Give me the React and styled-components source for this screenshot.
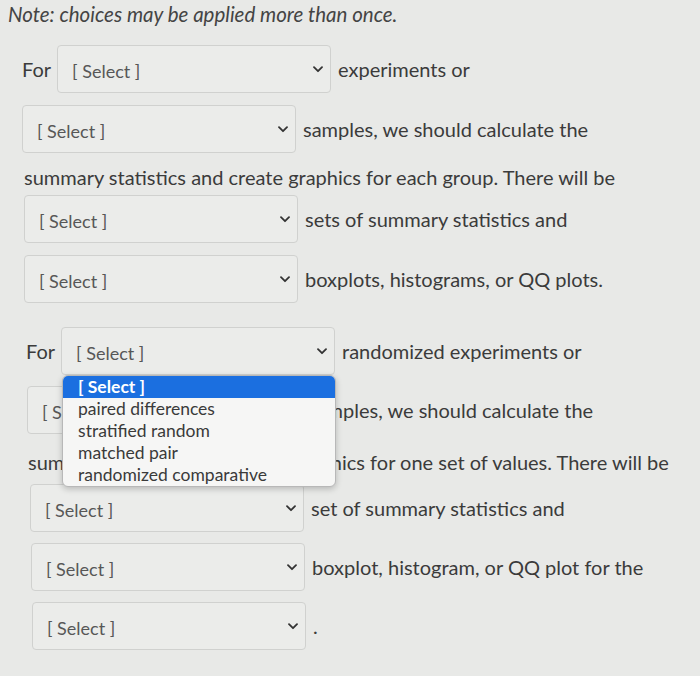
import styled, { createGlobalStyle } from "styled-components";

const GlobalStyle = createGlobalStyle`
  body {
    margin: 0;
    background: #e8e9e7;
    font-family: Lato, "Open Sans", sans-serif;
    color: #3b3b3b;
  }
`;

const OPTIONS = [
  "paired differences",
  "stratified random",
  "matched pair",
  "randomized comparative",
];

const Chevron = () => (
  <svg width="10" height="7" viewBox="0 0 10 7">
    <polyline
      points="1,1.2 5,5.2 9,1.2"
      fill="none"
      stroke="#333"
      strokeWidth="1.8"
      strokeLinecap="round"
      strokeLinejoin="round"
    />
  </svg>
);

const Dropdown = ({ open }) => (
  <SelectBox>
    <Placeholder>[ Select ]</Placeholder>
    <Chevron />
    {open && (
      <Menu>
        <MenuItem active>[ Select ]</MenuItem>
        {OPTIONS.map((o) => (
          <MenuItem key={o}>{o}</MenuItem>
        ))}
      </Menu>
    )}
  </SelectBox>
);

export default function App() {
  return (
    <Page>
      <GlobalStyle />
      <Note>Note: choices may be applied more than once.</Note>

      <Row top={17} indent={22}>
        <Words>For</Words>
        <Dropdown />
        <Words>experiments or</Words>
      </Row>
      <Row top={12} indent={22}>
        <Dropdown />
        <Words>samples, we should calculate the</Words>
      </Row>
      <TextLine top={9} indent={24}>
        summary statistics and create graphics for each group. There will be
      </TextLine>
      <Row top={3} indent={24}>
        <Dropdown />
        <Words>sets of summary statistics and</Words>
      </Row>
      <Row top={12} indent={24}>
        <Dropdown />
        <Words>boxplots, histograms, or QQ plots.</Words>
      </Row>

      <Row top={24} indent={26} raised>
        <Words>For</Words>
        <Dropdown open />
        <Words>randomized experiments or</Words>
      </Row>
      <Row top={11} indent={27}>
        <Dropdown />
        <Words>samples, we should calculate the</Words>
      </Row>
      <TextLine top={13} indent={28}>
        summary statistics and create graphics for one set of values. There will be
      </TextLine>
      <Row top={7} indent={30}>
        <Dropdown />
        <Words>set of summary statistics and</Words>
      </Row>
      <Row top={11} indent={31}>
        <Dropdown />
        <Words>boxplot, histogram, or QQ plot for the</Words>
      </Row>
      <Row top={11} indent={32}>
        <Dropdown />
        <Words>.</Words>
      </Row>
    </Page>
  );
}

const Page = styled.div`
  height: 676px;
  overflow: hidden;
  display: flex;
  flex-direction: column;
`;

const Note = styled.div`
  padding-left: 8px;
  font-size: 20.5px;
  line-height: 28px;
  font-style: italic;
  color: #444;
`;

const Row = styled.div`
  display: flex;
  align-items: center;
  height: 48px;
  margin-top: ${(p) => p.top}px;
  padding-left: ${(p) => p.indent}px;
  position: relative;
  z-index: ${(p) => (p.raised ? 5 : 1)};
`;

const TextLine = styled.div`
  height: 30px;
  line-height: 30px;
  margin-top: ${(p) => p.top}px;
  padding-left: ${(p) => p.indent}px;
  font-size: 20px;
  white-space: nowrap;
`;

const Words = styled.span`
  font-size: 20px;
  white-space: nowrap;
  margin: 0 6px 0 7px;
  &:first-child {
    margin-left: 0;
  }
`;

const SelectBox = styled.div`
  position: relative;
  box-sizing: border-box;
  flex: none;
  width: 274px;
  height: 48px;
  display: flex;
  align-items: center;
  justify-content: space-between;
  padding: 0 7px 0 14px;
  border: 1px solid #d0d1cf;
  border-radius: 4px;
  background: #ebecea;
`;

const Placeholder = styled.span`
  font-size: 18px;
  color: #575757;
  padding-top: 3px;
`;

const Menu = styled.div`
  position: absolute;
  top: calc(100% + 1px);
  left: 0;
  width: 274px;
  box-sizing: border-box;
  background: #f6f6f5;
  border: 1px solid #b8b8b8;
  border-radius: 6px;
  box-shadow: 0 2px 6px rgba(0, 0, 0, 0.22);
  overflow: hidden;
`;

const MenuItem = styled.div`
  height: 22px;
  line-height: 22px;
  padding-left: 15px;
  font-size: 17.5px;
  white-space: nowrap;
  color: ${(p) => (p.active ? "#fff" : "#3a3a3a")};
  background: ${(p) => (p.active ? "#1b6fe0" : "transparent")};
  font-weight: ${(p) => (p.active ? 700 : 400)};
`;
